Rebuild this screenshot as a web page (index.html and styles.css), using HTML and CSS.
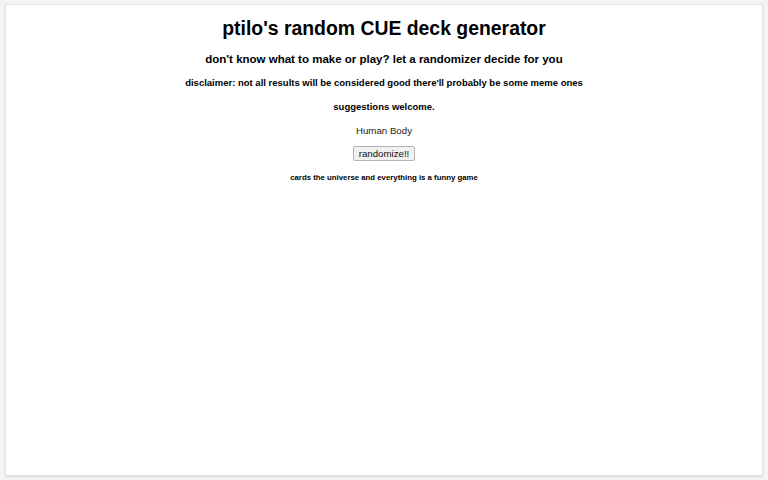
FILE: index.html
```html
<!DOCTYPE html>
<html>
	<head>
		<meta charset="UTF-8">
		<title>ptilo's random CUE deck generator</title>
		<link rel="stylesheet" href="styles.css">
	</head>
	<body>
		<div class="page">
			<h1>ptilo's random CUE deck generator</h1>
			<h3>don't know what to make or play? let a randomizer decide for you</h3>
			<h5>disclaimer: not all results will be considered good there'll probably be some meme ones</h5>
			<h5>suggestions welcome.</h5>
			<p class="result">Human Body</p>
			<button class="go">randomize!!</button>
			<h6>cards the universe and everything is a funny game</h6>
		</div>
	</body>
</html>
```

FILE: styles.css
```css
html,body{
	height: 100%;
}
body{
	margin: 0;
	padding: 4px 5px;
	box-sizing: border-box;
	background: #f4f4f4;
	font-family: "Liberation Sans", Arial, sans-serif;
	color: #000;
}
.page{
	height: 100%;
	box-sizing: border-box;
	background: #fff;
	border: 1px solid #e2e2e2;
	box-shadow: 0 1px 2px rgba(0,0,0,0.12);
	text-align: center;
	padding-top: 11px;
}
h1{
	font-size: 19.4px;
	margin: 0 0 11px;
	line-height: 24px;
}
h3{
	font-size: 11.5px;
	margin: 0 0 10px;
	line-height: 16px;
}
h5{
	font-size: 9.5px;
	margin: 0 0 12px;
	line-height: 12px;
}
.result{
	font-size: 9.7px;
	margin: 0;
	line-height: 12px;
	color: #222;
}
.go{
	display: block;
	margin: 9px auto 0;
	font-family: "Liberation Sans", Arial, sans-serif;
	font-size: 9.7px;
	padding: 1px 5px;
	height: 15px;
	line-height: 11px;
	background: #f0f0f0;
	border: 1px solid #b4b4b4;
	border-radius: 2px;
	color: #111;
}
h6{
	font-size: 7.8px;
	margin: 12px 0 0;
	line-height: 10px;
}
```
